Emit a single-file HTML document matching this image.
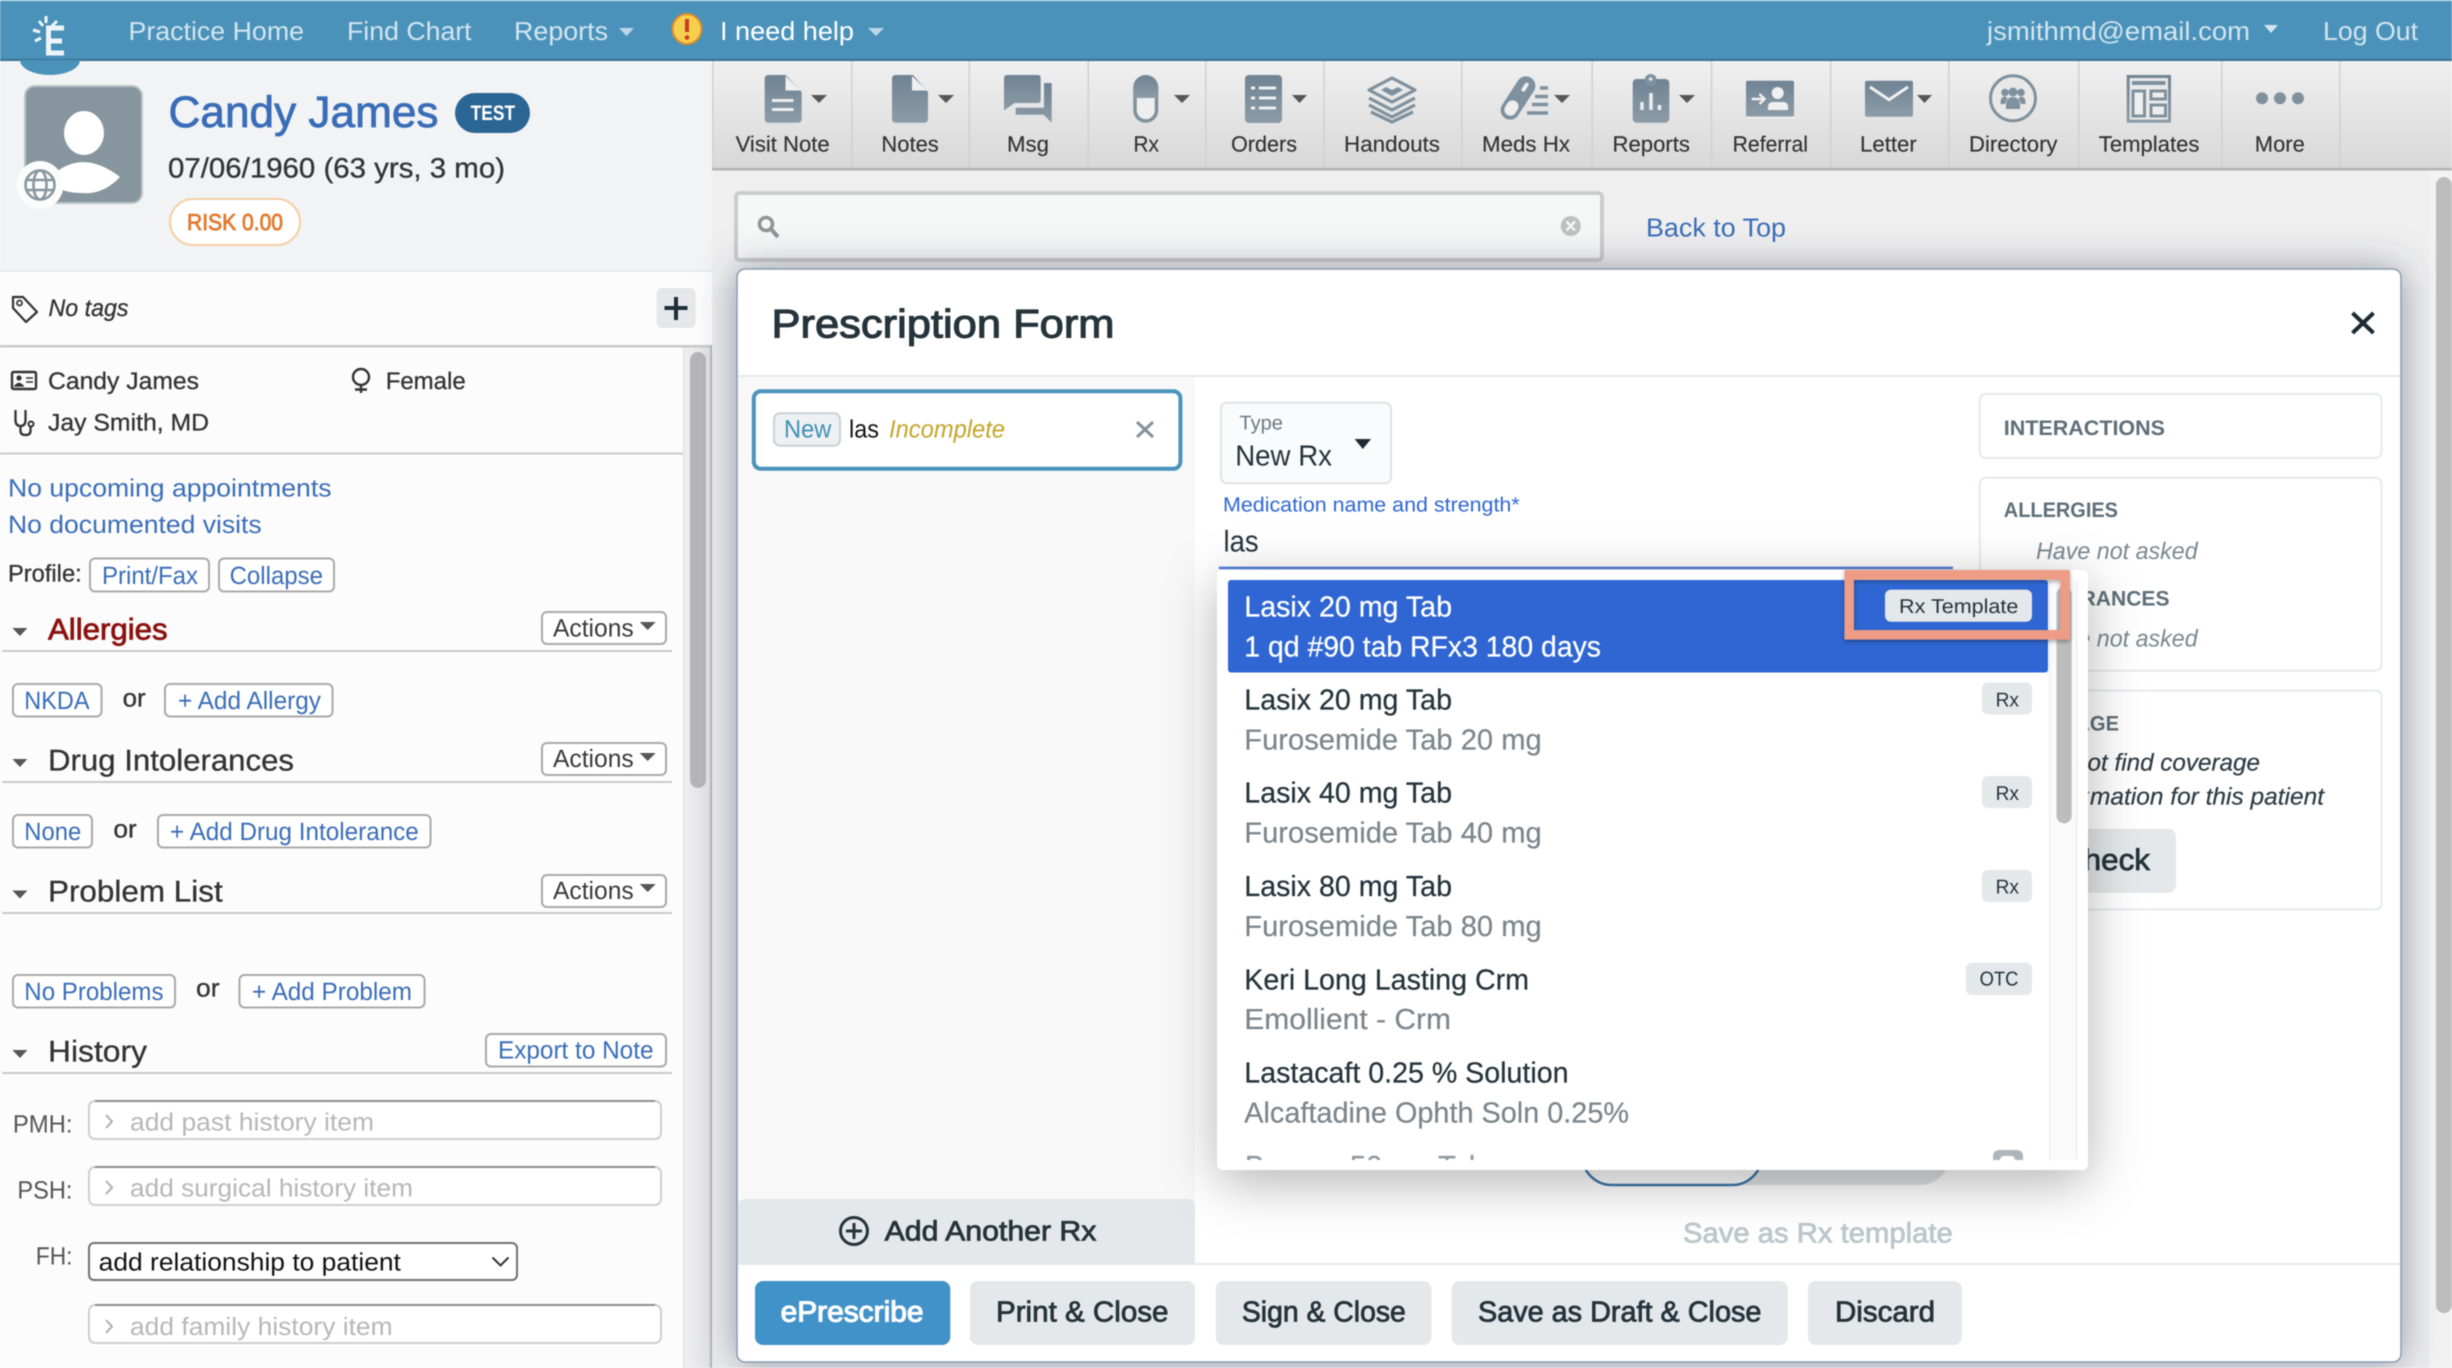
<!DOCTYPE html>
<html lang="en"><head><meta charset="utf-8"><title>Prescription Form</title>
<style>
html,body{margin:0;padding:0;background:#fff;width:2452px;height:1368px;overflow:hidden}
svg{display:block;filter:blur(.45px)}
text{font-family:"Liberation Sans",sans-serif;white-space:pre;text-rendering:geometricPrecision}
.b{stroke:currentColor;stroke-width:.8px}
.bb{font-weight:700}
.lnk{fill:#3a6db8}
.drk{fill:#333;color:#333;stroke:#333;stroke-width:.3px}
.mod{fill:#25333b;color:#25333b}
.nv{fill:#d3e5ef;font-size:26px}
.tb{fill:#333;font-size:22px;stroke:#333;stroke-width:.15px}
.ic{fill:#7f919e}
.car{fill:#565656}
.btn{fill:#fff;stroke:#a9a9a9;stroke-width:2}
.ph{fill:#b7b7b7;font-size:25px}
.lab{fill:#555;font-size:25px}
.gb{fill:#e4e8ea}
.row1{font-size:29px;fill:#25333b;stroke:#25333b;stroke-width:.25px}
.row2{font-size:29px;fill:#7b858c;stroke:#7b858c;stroke-width:.2px}
.wr{fill:#fff;stroke:#fff}
.hd{font-size:21px;fill:#5f6f79;font-weight:700}
</style></head><body>
<svg xmlns="http://www.w3.org/2000/svg" width="2452" height="1368" viewBox="0 0 2452 1368">
<defs>
<linearGradient id="tbg" x1="0" y1="0" x2="0" y2="1"><stop offset="0" stop-color="#f0f0f0"/><stop offset="1" stop-color="#d8d8d8"/></linearGradient>
<linearGradient id="trk" x1="0" y1="0" x2="1" y2="0"><stop offset="0" stop-color="#f0f0f1"/><stop offset="1" stop-color="#e0e1e3"/></linearGradient>
<linearGradient id="ico" x1="0" y1="0" x2="0" y2="1"><stop offset="0" stop-color="#6f8394"/><stop offset="1" stop-color="#8d9ca7"/></linearGradient>
<filter id="ms" filterUnits="userSpaceOnUse" x="600" y="180" width="1852" height="1188"><feDropShadow dx="0" dy="0" stdDeviation="18" flood-color="#3a4460" flood-opacity=".5"/></filter>
<filter id="ds" filterUnits="userSpaceOnUse" x="1100" y="480" width="1150" height="820"><feDropShadow dx="0" dy="12" stdDeviation="26" flood-color="#000" flood-opacity=".3"/></filter>
<filter id="ss" filterUnits="userSpaceOnUse" x="1830" y="560" width="260" height="100"><feDropShadow dx="0" dy="2" stdDeviation="2" flood-color="#000" flood-opacity=".35"/></filter>
<clipPath id="ddc"><rect x="1217" y="570" width="872" height="590"/></clipPath>
<clipPath id="avc"><rect x="24" y="85" width="119" height="119" rx="10"/></clipPath>
</defs>

<!-- left panel -->
<g id="left">
<rect x="0" y="60" width="712" height="212" fill="#f2f3f5"/>
<rect x="0" y="270" width="712" height="2" fill="#e6eaea"/>
<rect x="0" y="272" width="712" height="1096" fill="#fcfcfc"/>
<rect x="683" y="347" width="29" height="1021" fill="url(#trk)"/>
<rect x="683" y="347" width="2" height="1021" fill="#e6e6e7"/>
<rect x="690" y="352" width="16" height="436" rx="8" fill="#b5b5b7"/>
<rect x="0" y="345" width="712" height="2.500" fill="#c9c9c9"/>
<rect x="0" y="452.500" width="683" height="2" fill="#cbcbcb"/>
<rect x="710" y="345" width="2.500" height="1023" fill="#b4b6ba"/>

<!-- avatar -->
<rect x="25" y="86" width="117" height="117" rx="10" fill="#87969e" stroke="#b9c3c7" stroke-width="2"/>
<g clip-path="url(#avc)"><ellipse cx="84" cy="133" rx="20" ry="22" fill="#fff"/>
<path d="M56 172Q85 150 120 177Q103 195 82 193Q64 193 56 186Z" fill="#fff"/></g>
<ellipse cx="40" cy="185" rx="23.500" ry="24" fill="#fbfcfc"/>
<g fill="none" stroke="#87969e" stroke-width="2.600"><circle cx="40" cy="185" r="14.500"/><ellipse cx="40" cy="185" rx="6.500" ry="14.500"/><path d="M26 180h28M26 190h28"/></g>
<text x="168.500" y="127" font-size="44" class="lnk b" color="#3a6db8" textLength="270" lengthAdjust="spacingAndGlyphs">Candy James</text>
<rect x="455" y="93" width="75" height="40" rx="20" fill="#2b6594"/>
<text x="470.600" y="120" font-size="21" class="bb" fill="#fff" textLength="44.500" lengthAdjust="spacingAndGlyphs">TEST</text>
<text x="168" y="177.500" font-size="28" class="drk b" textLength="337" lengthAdjust="spacingAndGlyphs">07/06/1960 (63 yrs, 3 mo)</text>
<rect x="170" y="199" width="130" height="46" rx="23" fill="#fff" stroke="#f5cfa5" stroke-width="2"/>
<text x="187" y="230" font-size="23" fill="#e3792b" color="#e3792b" class="b" textLength="96" lengthAdjust="spacingAndGlyphs">RISK 0.00</text>

<!-- tags -->
<path d="M13 297h10l14 15-11 10-13-14z" fill="none" stroke="#333" stroke-width="2.200" stroke-linejoin="round"/><circle cx="19.500" cy="303" r="2.500" fill="none" stroke="#333" stroke-width="1.800"/>
<text x="48.500" y="316" font-size="24" font-style="italic" class="drk" textLength="80" lengthAdjust="spacingAndGlyphs">No tags</text>
<rect x="656.500" y="288" width="39" height="40" rx="6" fill="#e4e8ea"/>
<path d="M676 297v23M664.500 308h23" stroke="#1f2d36" stroke-width="4"/>

<!-- profile -->
<rect x="12" y="372" width="24" height="17" rx="1.500" fill="none" stroke="#333" stroke-width="2.400"/><circle cx="19" cy="378" r="2.600" fill="#333"/><path d="M15 386q4-5 8 0zM26 378h7M26 382h7" fill="#333" stroke="#333" stroke-width="1.500"/>
<text x="48" y="389" font-size="24" class="drk" textLength="151" lengthAdjust="spacingAndGlyphs">Candy James</text>
<circle cx="361" cy="377" r="8" fill="none" stroke="#333" stroke-width="2.400"/><path d="M361 385v8M355 389.500h12" stroke="#333" stroke-width="2.400"/>
<text x="385.700" y="389" font-size="24" class="drk" textLength="80" lengthAdjust="spacingAndGlyphs">Female</text>
<path d="M15.500 410v10q0 6 5 6t5-6v-10M20.500 426v5q0 4 5 4t5-4v-4" fill="none" stroke="#333" stroke-width="2.300"/><circle cx="31" cy="424" r="2.500" fill="none" stroke="#333" stroke-width="2"/>
<text x="48" y="430.700" font-size="24" class="drk" textLength="161" lengthAdjust="spacingAndGlyphs">Jay Smith, MD</text>

<text x="8" y="496.700" font-size="25" class="lnk" textLength="323.500" lengthAdjust="spacingAndGlyphs">No upcoming appointments</text>
<text x="8" y="533" font-size="25" class="lnk" textLength="253.700" lengthAdjust="spacingAndGlyphs">No documented visits</text>
<text x="8" y="581.700" font-size="24" class="drk" textLength="73.700" lengthAdjust="spacingAndGlyphs">Profile:</text>
<rect class="btn" x="90" y="558.500" width="119" height="33" rx="5"/>
<text x="102" y="584" font-size="25" class="lnk" textLength="96" lengthAdjust="spacingAndGlyphs">Print/Fax</text>
<rect class="btn" x="219" y="558.500" width="115" height="33" rx="5"/>
<text x="229.600" y="584" font-size="25" class="lnk" textLength="93.400" lengthAdjust="spacingAndGlyphs">Collapse</text>

<!-- allergies -->
<path class="car" d="M12.400 628h15l-7.500 8z"/>
<text x="48" y="639.300" font-size="30" fill="#8b120e" color="#8b120e" class="b" textLength="119.600" lengthAdjust="spacingAndGlyphs">Allergies</text>
<rect class="btn" x="542" y="612" width="124" height="32" rx="5"/>
<text x="553" y="636.700" font-size="25" fill="#3a3a3a" textLength="80.700" lengthAdjust="spacingAndGlyphs">Actions</text>
<path class="car" d="M639.700 622h16l-8 8z"/>
<rect x="2" y="650" width="670" height="2" fill="#c9c9c9"/>
<rect class="btn" x="13" y="684" width="88.500" height="32.500" rx="5"/>
<text x="24.300" y="709" font-size="25" class="lnk" textLength="65.200" lengthAdjust="spacingAndGlyphs">NKDA</text>
<text x="122.600" y="706.700" font-size="25" class="drk" textLength="23" lengthAdjust="spacingAndGlyphs">or</text>
<rect class="btn" x="165" y="684" width="167.500" height="32.500" rx="5"/>
<text x="178" y="709" font-size="25" class="lnk" textLength="143" lengthAdjust="spacingAndGlyphs">+ Add Allergy</text>

<!-- drug intolerances -->
<path class="car" d="M12.400 759h15l-7.500 8z"/>
<text x="48" y="770.700" font-size="30" class="drk b" textLength="246" lengthAdjust="spacingAndGlyphs">Drug Intolerances</text>
<rect class="btn" x="542" y="743" width="124" height="32" rx="5"/>
<text x="553" y="767" font-size="25" fill="#3a3a3a" textLength="80.700" lengthAdjust="spacingAndGlyphs">Actions</text>
<path class="car" d="M639.700 753h16l-8 8z"/>
<rect x="2" y="781" width="670" height="2" fill="#c9c9c9"/>
<rect class="btn" x="13" y="815" width="79" height="32.500" rx="5"/>
<text x="24.300" y="840" font-size="25" class="lnk" textLength="57" lengthAdjust="spacingAndGlyphs">None</text>
<text x="113.400" y="837.300" font-size="25" class="drk" textLength="23.400" lengthAdjust="spacingAndGlyphs">or</text>
<rect class="btn" x="158" y="815" width="272.500" height="32.500" rx="5"/>
<text x="170" y="840" font-size="25" class="lnk" textLength="248.800" lengthAdjust="spacingAndGlyphs">+ Add Drug Intolerance</text>

<!-- problem list -->
<path class="car" d="M12.400 890.500h15l-7.500 8z"/>
<text x="48" y="901.700" font-size="30" class="drk b" textLength="174.700" lengthAdjust="spacingAndGlyphs">Problem List</text>
<rect class="btn" x="542" y="875" width="124" height="32" rx="5"/>
<text x="553" y="899" font-size="25" fill="#3a3a3a" textLength="80.700" lengthAdjust="spacingAndGlyphs">Actions</text>
<path class="car" d="M639.700 884h16l-8 8z"/>
<rect x="2" y="912" width="670" height="2" fill="#c9c9c9"/>
<rect class="btn" x="13" y="975" width="162" height="32.500" rx="5"/>
<text x="24.300" y="1000" font-size="25" class="lnk" textLength="139.200" lengthAdjust="spacingAndGlyphs">No Problems</text>
<text x="196" y="996.700" font-size="25" class="drk" textLength="23.500" lengthAdjust="spacingAndGlyphs">or</text>
<rect class="btn" x="239.500" y="975" width="185" height="32.500" rx="5"/>
<text x="252" y="1000" font-size="25" class="lnk" textLength="160" lengthAdjust="spacingAndGlyphs">+ Add Problem</text>

<!-- history -->
<path class="car" d="M12.400 1050h15l-7.500 8z"/>
<text x="48" y="1061.700" font-size="30" class="drk b" textLength="99" lengthAdjust="spacingAndGlyphs">History</text>
<rect class="btn" x="486" y="1034" width="180" height="32.500" rx="5"/>
<text x="498" y="1058.300" font-size="25" class="lnk" textLength="155.500" lengthAdjust="spacingAndGlyphs">Export to Note</text>
<rect x="2" y="1072" width="670" height="2" fill="#c9c9c9"/>

<text x="12.900" y="1132.300" class="lab" textLength="59.600" lengthAdjust="spacingAndGlyphs">PMH:</text>
<rect x="89" y="1101" width="572" height="38" rx="6" fill="#fff" stroke="#cfcfcf" stroke-width="2"/><path d="M95 1101h560" stroke="#8c8c8c" stroke-width="2"/>
<path d="M106 1115l6 6.500-6 6.500" fill="none" stroke="#adadad" stroke-width="2"/>
<text x="130" y="1130.700" class="ph" textLength="244" lengthAdjust="spacingAndGlyphs">add past history item</text>

<text x="17.400" y="1198.300" class="lab" textLength="55.100" lengthAdjust="spacingAndGlyphs">PSH:</text>
<rect x="89" y="1167" width="572" height="38" rx="6" fill="#fff" stroke="#cfcfcf" stroke-width="2"/><path d="M95 1167h560" stroke="#8c8c8c" stroke-width="2"/>
<path d="M106 1181l6 6.500-6 6.500" fill="none" stroke="#adadad" stroke-width="2"/>
<text x="130" y="1196.700" class="ph" textLength="283" lengthAdjust="spacingAndGlyphs">add surgical history item</text>

<text x="35.800" y="1264.300" class="lab" textLength="36.700" lengthAdjust="spacingAndGlyphs">FH:</text>
<rect x="89" y="1243" width="428" height="37" rx="5" fill="#fff" stroke="#707070" stroke-width="2"/>
<text x="98.700" y="1270.700" font-size="25" fill="#111" textLength="302.200" lengthAdjust="spacingAndGlyphs">add relationship to patient</text>
<path d="M492.500 1257.500l8 8 8-8" fill="none" stroke="#333" stroke-width="2"/>

<rect x="89" y="1305" width="572" height="38" rx="6" fill="#fff" stroke="#cfcfcf" stroke-width="2"/><path d="M95 1305h560" stroke="#8c8c8c" stroke-width="2"/>
<path d="M106 1320l6 6.500-6 6.500" fill="none" stroke="#adadad" stroke-width="2"/>
<text x="130" y="1335" class="ph" textLength="262.600" lengthAdjust="spacingAndGlyphs">add family history item</text>
</g>

<!-- content background -->
<rect x="712" y="170" width="1740" height="117" fill="#efefef"/>
<rect x="712" y="287" width="1740" height="1081" fill="#ececee"/>
<rect x="2429" y="170" width="23" height="1198" fill="#f2f2f2"/>
<rect x="2436" y="177" width="16" height="1136" rx="8" fill="#bdbdbd"/>

<!-- search -->
<rect x="736" y="193" width="866" height="67" rx="4" fill="#f6f7f7" stroke="#cccccc" stroke-width="4"/>
<circle cx="766" cy="224" r="6.500" fill="none" stroke="#8f9499" stroke-width="3.500"/><path d="M771 229l7 8" stroke="#8f9499" stroke-width="4"/>
<circle cx="1570.800" cy="226" r="10" fill="#c0c0c0"/><path d="M1566.500 221.500l8.500 9M1575 221.500l-8.500 9" stroke="#f6f7f7" stroke-width="2.400"/>
<text x="1646" y="236.700" font-size="26" class="lnk" textLength="140" lengthAdjust="spacingAndGlyphs">Back to Top</text>

<!-- toolbar -->
<g id="toolbar">
<rect x="712" y="61" width="1740" height="108" fill="url(#tbg)"/>
<rect x="712" y="168" width="1740" height="2.500" fill="#b2b2b2"/>
<g fill="#d0d0d0"><rect x="712" y="61" width="1.500" height="107"/><rect x="851" y="61" width="1.500" height="107"/><rect x="968.500" y="61" width="1.500" height="107"/><rect x="1087.500" y="61" width="1.500" height="107"/><rect x="1205" y="61" width="1.500" height="107"/><rect x="1323.400" y="61" width="1.500" height="107"/><rect x="1461" y="61" width="1.500" height="107"/><rect x="1591.400" y="61" width="1.500" height="107"/><rect x="1710.800" y="61" width="1.500" height="107"/><rect x="1829.900" y="61" width="1.500" height="107"/><rect x="1948" y="61" width="1.500" height="107"/><rect x="2078" y="61" width="1.500" height="107"/><rect x="2221" y="61" width="1.500" height="107"/><rect x="2339" y="61" width="1.500" height="107"/></g>

<!-- visit note -->
<path d="M768.700 75h17l16 17v26.700q0 4-4 4h-29q-4 0-4-4V79q0-4 4-4z" fill="url(#ico)"/><path d="M785.500 76v14.500h15z" fill="#f0f0f0"/><path d="M772 100.500h21.500M772 109.500h21.500" stroke="#eee" stroke-width="3"/><path class="car" d="M811 95h16l-8 8z"/>
<!-- notes -->
<path d="M896 75h17l15 17v26.700q0 4-4 4h-28q-4 0-4-4V79q0-4 4-4z" fill="url(#ico)"/><path d="M912 76v14.500h15z" fill="#f0f0f0"/><path class="car" d="M938 95h16l-8 8z"/>
<!-- msg -->
<path d="M1004 78q0-3 3-3h30.700q3 0 3 3v22q0 3-3 3h-23l-10.700 7.500z" fill="url(#ico)"/><path d="M1044 83h7.700v39.700l-8-8h-28v-7h28.300z" fill="url(#ico)"/>
<!-- rx -->
<rect x="1135" y="77" width="21.500" height="44" rx="10.700" fill="#eee" stroke="#7f919e" stroke-width="3.500"/><path d="M1133.300 98V87.500a12.500 12.500 0 0 1 25 0V98z" fill="url(#ico)"/><path class="car" d="M1174 95h16l-8 8z"/>
<!-- orders -->
<rect x="1245" y="75" width="37" height="48" rx="4" fill="url(#ico)"/><path d="M1251 88h4M1259 88h17M1251 98h4M1259 98h17M1251 108h4M1259 108h17" stroke="#eee" stroke-width="3"/><path class="car" d="M1292 95h15l-7.500 8z"/>
<!-- handouts -->
<g fill="none" stroke="#7f919e" stroke-width="3.200" stroke-linejoin="round"><path d="M1369 90l23-12 23 12-23 12z"/><path d="M1369 98l23 12 23-12M1369 105l23 12 23-12M1371 112l21 10 21-10"/></g><path d="M1381 90l5-3 6 3 6-3 5 3-11 6z" fill="#7f919e"/>
<!-- meds hx -->
<g transform="rotate(33 1518 98)"><rect x="1508.500" y="74" width="19" height="48" rx="9.500" fill="#7f919e"/><rect x="1512" y="102" width="12" height="16" rx="6" fill="#eee"/><rect x="1516" y="80" width="4" height="10" rx="2" fill="#eee"/></g><path d="M1540 88h8M1535 96.500h13M1532 104.500h16M1527 113h21" stroke="#7f919e" stroke-width="3.500"/><path class="car" d="M1554 95h16l-8 8z"/>
<!-- reports -->
<rect x="1632.700" y="79" width="36.600" height="43.700" rx="4" fill="url(#ico)"/><circle cx="1650.700" cy="80" r="6" fill="#7f919e"/><circle cx="1650.700" cy="79" r="1.800" fill="#e6e6e6"/><path d="M1642 110v-8M1651 110v-17M1659.500 110v-5" stroke="#eee" stroke-width="3.500"/><path class="car" d="M1679 95h16l-8 8z"/>
<!-- referral -->
<rect x="1746" y="80.700" width="48" height="36" rx="1.500" fill="url(#ico)"/><circle cx="1777.700" cy="93" r="6" fill="#f0f0f0"/><path d="M1768 110v-3q0-5 5-5h10q5 0 5 5v3z" fill="#f0f0f0"/><path d="M1751.700 99h12M1759.500 94l5 5-5 5" fill="none" stroke="#f0f0f0" stroke-width="2.500"/><path d="M1746 117.500h48" stroke="#f6f6f6" stroke-width="1.500"/>
<!-- letter -->
<rect x="1865" y="80.700" width="48" height="36" rx="2" fill="url(#ico)"/><path d="M1870 87l19 12.700 19-12.700" fill="none" stroke="#f0f0f0" stroke-width="3"/><path class="car" d="M1917 95h15l-7.500 8z"/>
<!-- directory -->
<circle cx="2013" cy="98.300" r="22.500" fill="#e8e8e8" stroke="#7f919e" stroke-width="3"/><circle cx="2013" cy="92" r="4.500" fill="#7f919e"/><circle cx="2005" cy="92.500" r="3.800" fill="#7f919e"/><circle cx="2021" cy="92.500" r="3.800" fill="#7f919e"/><path d="M2006 109q-1-12 7-12t7 12zM2000.500 104q-.5-7.500 5-7.500l2 2-2.500 5.500zM2025.500 104q.5-7.500-5-7.500l-2 2 2.500 5.500z" fill="#7f919e"/>
<!-- templates -->
<rect x="2126.700" y="75" width="44.300" height="47.700" fill="url(#ico)"/><rect x="2129.700" y="78" width="38.300" height="41.700" fill="#e9e9e9"/><path d="M2132 83h33.500" stroke="#7f919e" stroke-width="4"/><rect x="2133" y="91" width="11.500" height="25" fill="#eee" stroke="#7f919e" stroke-width="3"/><rect x="2151" y="91" width="14.500" height="8" fill="#eee" stroke="#7f919e" stroke-width="3"/><rect x="2151" y="105" width="14.500" height="11" fill="#eee" stroke="#7f919e" stroke-width="3"/>
<!-- more -->
<circle cx="2262" cy="98.300" r="6" fill="#7f919e"/><circle cx="2280" cy="98.300" r="6" fill="#7f919e"/><circle cx="2298" cy="98.300" r="6" fill="#7f919e"/>

<text x="735.600" y="151.700" class="tb" textLength="94.100" lengthAdjust="spacingAndGlyphs">Visit Note</text>
<text x="881.400" y="151.700" class="tb" textLength="57.400" lengthAdjust="spacingAndGlyphs">Notes</text>
<text x="1007" y="151.700" class="tb" textLength="42" lengthAdjust="spacingAndGlyphs">Msg</text>
<text x="1133.400" y="151.700" class="tb" textLength="25.600" lengthAdjust="spacingAndGlyphs">Rx</text>
<text x="1231" y="151.700" class="tb" textLength="66" lengthAdjust="spacingAndGlyphs">Orders</text>
<text x="1344" y="151.700" class="tb" textLength="96" lengthAdjust="spacingAndGlyphs">Handouts</text>
<text x="1482" y="151.700" class="tb" textLength="88" lengthAdjust="spacingAndGlyphs">Meds Hx</text>
<text x="1612.500" y="151.700" class="tb" textLength="77.500" lengthAdjust="spacingAndGlyphs">Reports</text>
<text x="1732.600" y="151.700" class="tb" textLength="75.400" lengthAdjust="spacingAndGlyphs">Referral</text>
<text x="1860" y="151.700" class="tb" textLength="56.800" lengthAdjust="spacingAndGlyphs">Letter</text>
<text x="1969" y="151.700" class="tb" textLength="88.500" lengthAdjust="spacingAndGlyphs">Directory</text>
<text x="2098.800" y="151.700" class="tb" textLength="100.600" lengthAdjust="spacingAndGlyphs">Templates</text>
<text x="2254.800" y="151.700" class="tb" textLength="50" lengthAdjust="spacingAndGlyphs">More</text>
</g>

<!-- nav -->
<g id="nav">
<rect x="0" y="0" width="2452" height="60" fill="#4a92ba"/>
<rect x="0" y="0" width="2452" height="1.200" fill="#9fc8de"/>
<rect x="0" y="59" width="2452" height="2" fill="#3c6f8f"/>
<path d="M20 60a30 15 0 0 0 60 0z" fill="#4a92ba"/>
<path d="M46 28h18M46 41h16M46 53h18M48.500 28v25" stroke="#eef5f9" stroke-width="5" fill="none"/>
<path d="M46 16v7M57 21l-5 5M33 30l7 2M35 41l6-3M39 21l4 5" stroke="#eef5f9" stroke-width="3"/>
<text x="128.500" y="40" class="nv" textLength="175.500" lengthAdjust="spacingAndGlyphs">Practice Home</text>
<text x="347" y="40" class="nv" textLength="124.600" lengthAdjust="spacingAndGlyphs">Find Chart</text>
<text x="514" y="40" class="nv" textLength="94" lengthAdjust="spacingAndGlyphs">Reports</text>
<path d="M619 28h15l-7.500 8z" fill="#bcd7e6"/>
<ellipse cx="687" cy="29" rx="14.500" ry="15" fill="#f6cf4c" stroke="#e08a2c" stroke-width="2"/>
<path d="M687 19v13" stroke="#c83b22" stroke-width="4"/><circle cx="687" cy="37.500" r="2.300" fill="#c83b22"/>
<text x="720" y="40" class="nv" style="fill:#fff" textLength="134" lengthAdjust="spacingAndGlyphs">I need help</text>
<path d="M868 28h16l-8 8z" fill="#bcd7e6"/>
<text x="1987" y="40" class="nv" textLength="263" lengthAdjust="spacingAndGlyphs">jsmithmd@email.com</text>
<path d="M2264 25h14l-7 8z" fill="#d3e5ef"/>
<text x="2323" y="40" class="nv" textLength="95" lengthAdjust="spacingAndGlyphs">Log Out</text>
</g>

<!-- modal -->
<g id="modal">
<rect x="737" y="269" width="1664" height="1093" rx="8" fill="#fff" stroke="#8a9bb0" stroke-width="1.500" filter="url(#ms)"/>
<rect x="738" y="377" width="457" height="887" fill="#f8f8f8"/>
<rect x="738" y="375" width="1662" height="2" fill="#e6eaec"/>
<text x="771.500" y="337.300" font-size="40" class="mod b" style="stroke-width:1.100px" textLength="343" lengthAdjust="spacingAndGlyphs">Prescription Form</text>
<path d="M2352.500 313l21 20M2373.500 313l-21 20" stroke="#1e2b33" stroke-width="4"/>

<!-- rx card -->
<rect x="753.800" y="391.300" width="426.600" height="77.400" rx="7" fill="#fff" stroke="#4a93bb" stroke-width="4"/>
<rect x="774" y="413.300" width="66" height="32.400" rx="6" fill="#eef1f3" stroke="#c8d0d4" stroke-width="2"/>
<text x="784" y="437.700" font-size="25" fill="#3f90b5" textLength="47.300" lengthAdjust="spacingAndGlyphs">New</text>
<text x="849" y="437.700" font-size="25" fill="#111" textLength="30" lengthAdjust="spacingAndGlyphs">las</text>
<text x="889" y="437.700" font-size="25" font-style="italic" fill="#c3a52a" textLength="116" lengthAdjust="spacingAndGlyphs">Incomplete</text>
<path d="M1137 422l16 15M1153 422l-16 15" stroke="#84929b" stroke-width="3"/>

<!-- type -->
<rect x="1221" y="402.700" width="170" height="80.600" rx="6" fill="#fafbfc" stroke="#dfe3e6" stroke-width="2"/>
<text x="1239.400" y="429.300" font-size="20" fill="#6c7a84" textLength="43.600" lengthAdjust="spacingAndGlyphs">Type</text>
<text x="1235.200" y="465.300" font-size="29" class="mod" textLength="96.800" lengthAdjust="spacingAndGlyphs">New Rx</text>
<path d="M1354.600 439h16.400l-8.200 10z" fill="#1e2b33"/>
<text x="1223" y="511.700" font-size="20.500" fill="#2f66d6" textLength="296.700" lengthAdjust="spacingAndGlyphs">Medication name and strength*</text>
<text x="1223.500" y="551.700" font-size="30" class="mod" textLength="35.100" lengthAdjust="spacingAndGlyphs">las</text>
<rect x="1219" y="566.700" width="734" height="2.500" fill="#4a7ad9"/>

<!-- right panels -->
<rect x="1979.800" y="394" width="401.700" height="64" rx="6" fill="#fff" stroke="#e6eaec" stroke-width="2"/>
<text x="2003.800" y="435" class="hd" textLength="161.200" lengthAdjust="spacingAndGlyphs">INTERACTIONS</text>
<rect x="1979.800" y="477.700" width="401.700" height="193" rx="6" fill="#fff" stroke="#e6eaec" stroke-width="2"/>
<text x="2003.800" y="517" class="hd" textLength="114.200" lengthAdjust="spacingAndGlyphs">ALLERGIES</text>
<text x="2036" y="559" font-size="24" font-style="italic" fill="#7a8890" textLength="161.700" lengthAdjust="spacingAndGlyphs">Have not asked</text>
<text x="2003.800" y="605.500" class="hd" textLength="165.700" lengthAdjust="spacingAndGlyphs">INTOLERANCES</text>
<text x="2036" y="646.700" font-size="24" font-style="italic" fill="#7a8890" textLength="161.700" lengthAdjust="spacingAndGlyphs">Have not asked</text>
<rect x="1979.800" y="690.500" width="401.700" height="219" rx="6" fill="#fff" stroke="#e6eaec" stroke-width="2"/>
<text x="2003.800" y="730.600" class="hd" textLength="115.200" lengthAdjust="spacingAndGlyphs">COVERAGE</text>
<text x="2004" y="770.600" font-size="24" font-style="italic" fill="#2e3b44" stroke="#2e3b44" stroke-width=".2" textLength="256" lengthAdjust="spacingAndGlyphs">Could not find coverage</text>
<text x="2030" y="804.500" font-size="24" font-style="italic" fill="#2e3b44" stroke="#2e3b44" stroke-width=".2" textLength="58" lengthAdjust="spacingAndGlyphs">infor</text>
<text x="2090" y="804.500" font-size="24" font-style="italic" fill="#2e3b44" stroke="#2e3b44" stroke-width=".2" textLength="234" lengthAdjust="spacingAndGlyphs">mation for this patient</text>
<rect x="2004" y="828.700" width="172" height="64" rx="8" class="gb"/>
<text x="2061" y="870" font-size="30" class="mod b" textLength="89" lengthAdjust="spacingAndGlyphs">Check</text>

<!-- add another -->
<path d="M738 1263v-56q0-8 8-8h441q8 0 8 8v56z" class="gb"/>
<circle cx="854" cy="1231" r="13.500" fill="none" stroke="#25333b" stroke-width="3"/><path d="M854 1223v16M846 1231h16" stroke="#25333b" stroke-width="3"/>
<text x="884.600" y="1240.700" font-size="28" class="mod b" textLength="211.800" lengthAdjust="spacingAndGlyphs">Add Another Rx</text>
<text x="1683" y="1242.700" font-size="28" fill="#bcc8cd" color="#bcc8cd" class="b" textLength="269.700" lengthAdjust="spacingAndGlyphs">Save as Rx template</text>
<rect x="738" y="1263" width="1662" height="2" fill="#e6eaec"/>

<!-- pill behind dropdown -->
<rect x="1700" y="1125" width="250" height="60" rx="30" fill="#dfe3e6"/>
<rect x="1582" y="1125" width="180" height="60" rx="30" fill="#fff" stroke="#3c77ad" stroke-width="2.500"/>

<!-- footer buttons -->
<rect x="755" y="1281" width="195.300" height="64" rx="8" fill="#4192c9"/>
<text x="780.600" y="1321.700" font-size="29" fill="#fff" color="#fff" class="b" style="stroke-width:1.100px" textLength="142.900" lengthAdjust="spacingAndGlyphs">ePrescribe</text>
<rect x="970" y="1281" width="225" height="64" rx="8" class="gb"/>
<text x="996" y="1321.700" font-size="29" class="mod b" textLength="172.500" lengthAdjust="spacingAndGlyphs">Print &amp; Close</text>
<rect x="1215.700" y="1281" width="215.700" height="64" rx="8" class="gb"/>
<text x="1241.900" y="1321.700" font-size="29" class="mod b" textLength="163.900" lengthAdjust="spacingAndGlyphs">Sign &amp; Close</text>
<rect x="1451.800" y="1281" width="336" height="64" rx="8" class="gb"/>
<text x="1478" y="1321.700" font-size="29" class="mod b" textLength="283.400" lengthAdjust="spacingAndGlyphs">Save as Draft &amp; Close</text>
<rect x="1808" y="1281" width="153.900" height="64" rx="8" class="gb"/>
<text x="1835" y="1321.700" font-size="29" class="mod b" textLength="100" lengthAdjust="spacingAndGlyphs">Discard</text>
</g>

<!-- dropdown -->
<g id="dropdown">
<rect x="1217" y="570" width="871" height="600" rx="6" fill="#fff" filter="url(#ds)"/>
<rect x="1228" y="580" width="820" height="92.500" rx="3" fill="#2f66d3"/>
<text x="1244.300" y="616.700" class="row1 wr" textLength="207.700" lengthAdjust="spacingAndGlyphs">Lasix 20 mg Tab</text>
<text x="1244.300" y="656.700" class="row1 wr" textLength="356.700" lengthAdjust="spacingAndGlyphs">1 qd #90 tab RFx3 180 days</text>
<rect x="1885" y="589.600" width="147" height="32.100" rx="6" class="gb"/>
<text x="1899" y="612.800" font-size="20" class="mod" textLength="119.400" lengthAdjust="spacingAndGlyphs">Rx Template</text>

<text x="1244.300" y="709.300" class="row1" textLength="207.700" lengthAdjust="spacingAndGlyphs">Lasix 20 mg Tab</text>
<text x="1244.300" y="749.300" class="row2" textLength="297.400" lengthAdjust="spacingAndGlyphs">Furosemide Tab 20 mg</text>
<rect x="1982" y="682.400" width="50" height="32.100" rx="6" class="gb"/>
<text x="1995.600" y="706.300" font-size="20" class="mod" textLength="23.400" lengthAdjust="spacingAndGlyphs">Rx</text>

<text x="1244.300" y="802.700" class="row1" textLength="207.700" lengthAdjust="spacingAndGlyphs">Lasix 40 mg Tab</text>
<text x="1244.300" y="842.700" class="row2" textLength="297.400" lengthAdjust="spacingAndGlyphs">Furosemide Tab 40 mg</text>
<rect x="1982" y="776" width="50" height="32.100" rx="6" class="gb"/>
<text x="1995.600" y="799.800" font-size="20" class="mod" textLength="23.400" lengthAdjust="spacingAndGlyphs">Rx</text>

<text x="1244.300" y="896" class="row1" textLength="207.700" lengthAdjust="spacingAndGlyphs">Lasix 80 mg Tab</text>
<text x="1244.300" y="936" class="row2" textLength="297.400" lengthAdjust="spacingAndGlyphs">Furosemide Tab 80 mg</text>
<rect x="1982" y="870" width="50" height="32.100" rx="6" class="gb"/>
<text x="1995.600" y="893.700" font-size="20" class="mod" textLength="23.400" lengthAdjust="spacingAndGlyphs">Rx</text>

<text x="1244.300" y="989.300" class="row1" textLength="284.700" lengthAdjust="spacingAndGlyphs">Keri Long Lasting Crm</text>
<text x="1244.300" y="1029" class="row2" textLength="206.700" lengthAdjust="spacingAndGlyphs">Emollient - Crm</text>
<rect x="1966" y="962.700" width="66" height="32.300" rx="6" class="gb"/>
<text x="1979.600" y="985.700" font-size="20" class="mod" textLength="38.900" lengthAdjust="spacingAndGlyphs">OTC</text>

<text x="1244.300" y="1082.700" class="row1" textLength="324.200" lengthAdjust="spacingAndGlyphs">Lastacaft 0.25 % Solution</text>
<text x="1244.300" y="1122.300" class="row2" textLength="384.700" lengthAdjust="spacingAndGlyphs">Alcaftadine Ophth Soln 0.25%</text>

<g clip-path="url(#ddc)">
<text x="1245" y="1176" class="row1" style="fill:#8d979e;stroke:#8d979e" textLength="240" lengthAdjust="spacingAndGlyphs">Benzac 50 mg Tab</text>
<rect x="1993" y="1150" width="30" height="30" rx="6" fill="#aeb6bb"/>
<rect x="2000" y="1156" width="15" height="10" rx="4" fill="#fff"/>
</g>

<rect x="2049" y="580" width="28" height="580" fill="#fafafa"/>
<rect x="2049" y="580" width="1.500" height="580" fill="#ededed"/>
<rect x="2076" y="580" width="1.500" height="580" fill="#ededed"/>
<rect x="2056.500" y="587" width="15.200" height="236.400" rx="7.600" fill="#bdbdbd"/>
<rect x="1849.200" y="574.800" width="216" height="60" fill="none" stroke="#ee9c85" stroke-width="9.500" filter="url(#ss)"/>
</g>
</svg>
</body></html>
